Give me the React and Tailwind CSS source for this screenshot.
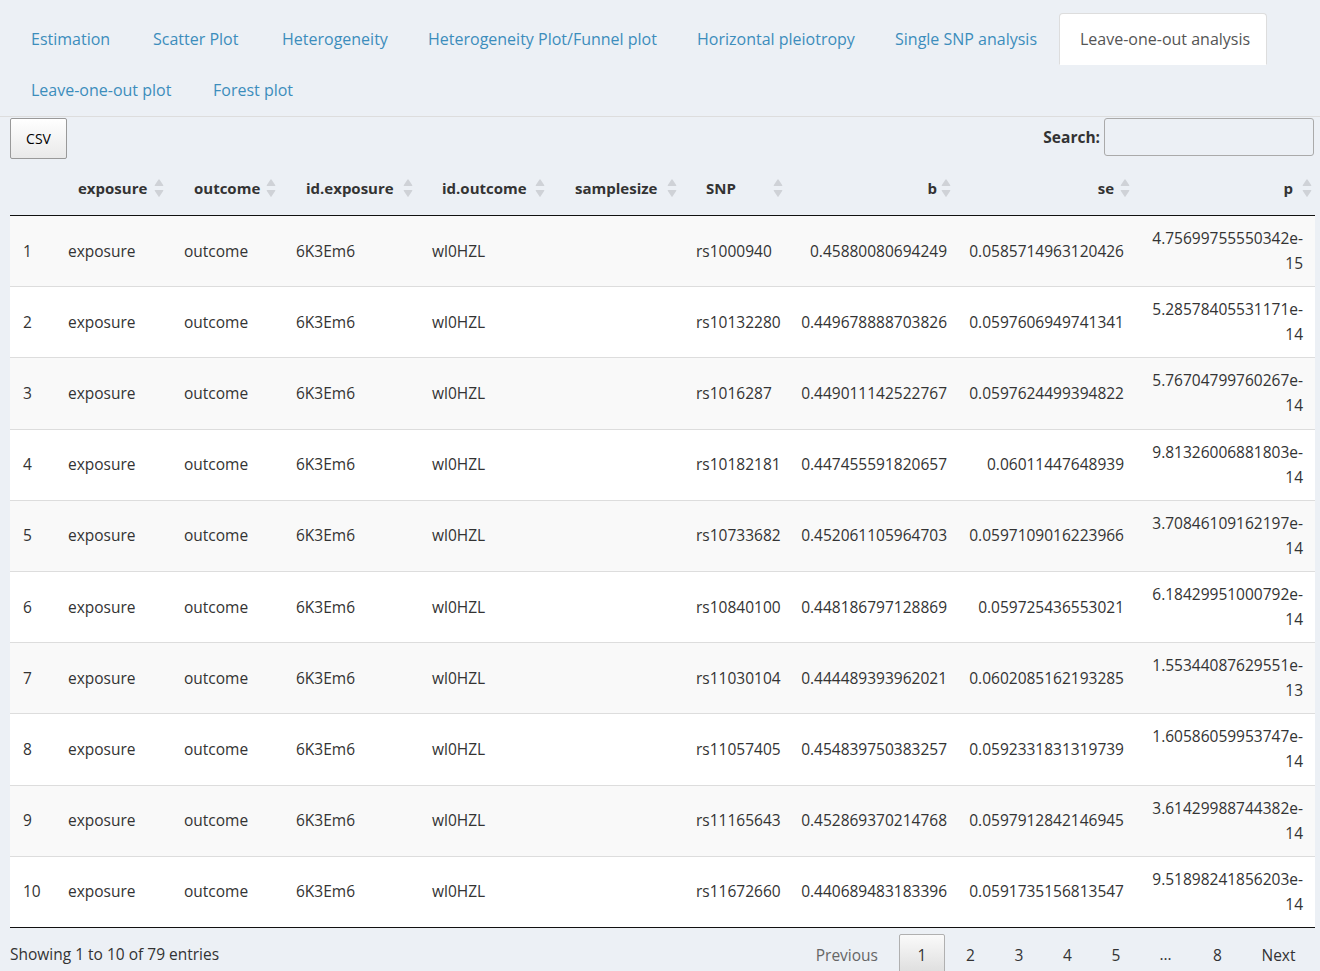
import React from "react";

const FONT = { fontFamily: '"Open Sans", "Liberation Sans", Arial, sans-serif' };

const tabsRow = [
  { label: "Estimation", cls: "w-[120px]" },
  { label: "Scatter Plot", cls: "w-[127px]" },
  { label: "Heterogeneity", cls: "w-[144px]" },
  { label: "Heterogeneity Plot/Funnel plot", cls: "w-[267px]" },
  { label: "Horizontal pleiotropy", cls: "w-[196px]" },
  { label: "Single SNP analysis", cls: "w-[183px]" },
  { label: "Leave-one-out analysis", cls: "w-[208px]", active: true },
  { label: "Leave-one-out plot", cls: "w-[180px]" },
  { label: "Forest plot", cls: "w-[118px]" },
];

const rows = [
  ["1", "rs1000940", "0.45880080694249", "0.0585714963120426", "4.75699755550342e", "15"],
  ["2", "rs10132280", "0.449678888703826", "0.0597606949741341", "5.28578405531171e", "14"],
  ["3", "rs1016287", "0.449011142522767", "0.0597624499394822", "5.76704799760267e", "14"],
  ["4", "rs10182181", "0.447455591820657", "0.06011447648939", "9.81326006881803e", "14"],
  ["5", "rs10733682", "0.452061105964703", "0.0597109016223966", "3.70846109162197e", "14"],
  ["6", "rs10840100", "0.448186797128869", "0.059725436553021", "6.18429951000792e", "14"],
  ["7", "rs11030104", "0.444489393962021", "0.0602085162193285", "1.55344087629551e", "13"],
  ["8", "rs11057405", "0.454839750383257", "0.0592331831319739", "1.60586059953747e", "14"],
  ["9", "rs11165643", "0.452869370214768", "0.0597912842146945", "3.61429988744382e", "14"],
  ["10", "rs11672660", "0.440689483183396", "0.0591735156813547", "9.51898241856203e", "14"],
];

function SortIcon({ cls }) {
  return (
    <svg
      width="10"
      height="20"
      viewBox="0 0 10 20"
      className={"absolute top-1/2 -translate-y-1/2 " + cls}
    >
      <path d="M5 1.2 Q5.4 1.2 5.7 1.7 L9.3 7.3 Q9.6 8 8.9 8 L1.1 8 Q0.4 8 0.7 7.3 L4.3 1.7 Q4.6 1.2 5 1.2 Z" fill="#000" fillOpacity="0.12" />
      <path d="M1.1 12 L8.9 12 Q9.6 12 9.3 12.7 L5.7 18.3 Q5.4 18.8 5 18.8 Q4.6 18.8 4.3 18.3 L0.7 12.7 Q0.4 12 1.1 12 Z" fill="#000" fillOpacity="0.12" />
    </svg>
  );
}

function Th({ children, align = "left", pad, arrow }) {
  return (
    <th
      className={
        "relative pt-[15px] pb-[14px] leading-[25px] text-[15px] font-bold text-[#333] border-b border-b-[#111] whitespace-nowrap " +
        (align === "left" ? "text-left " : "text-right ") +
        pad
      }
    >
      {children}
      {arrow && <SortIcon cls={arrow} />}
    </th>
  );
}

export default function App() {
  return (
    <div className="min-h-screen w-full bg-[#ecf0f5] text-[#333]" style={FONT}>
      {/* Tabs */}
      <ul className="flex flex-wrap pt-[13px] pb-[1px] pl-[10px] border-b border-[#ddd]">
        {tabsRow.map((t) => (
          <li key={t.label} className={"mr-[2px] mb-[-1px] h-[52px] " + t.cls}>
            <a
              className={
                "flex h-full items-center px-[20px] text-[16px] leading-[25px] whitespace-nowrap rounded-t-[4px] border " +
                (t.active
                  ? "bg-white border-[#ddd] border-b-transparent text-[#555]"
                  : "border-transparent text-[#3c8dbc]")
              }
            >
              {t.label}
            </a>
          </li>
        ))}
      </ul>

      <div className="pl-[10px] pr-[5px]">
        {/* Controls */}
        <div className="flex justify-between items-start pt-[1px] h-[44px]">
          <button className="w-[57px] h-[41px] flex items-center justify-center rounded-[2px] border border-[#999] bg-gradient-to-b from-white to-[#e9e9e9] text-[14px] text-black">
            CSV
          </button>
          <label className="flex items-center mr-[1px] h-[38px]">
            <span className="font-bold text-[15.5px] text-[#333] pt-[1px]">Search:</span>
            <input className="ml-[4px] w-[210px] h-[38px] rounded-[3px] border border-[#aaa] bg-transparent px-[5px] outline-none" />
          </label>
        </div>

        {/* Table */}
        <table className="table-fixed w-[1305px]">
          <colgroup>
            <col className="w-[48px]" />
            <col className="w-[116px]" />
            <col className="w-[112px]" />
            <col className="w-[136px]" />
            <col className="w-[133px]" />
            <col className="w-[131px]" />
            <col className="w-[107px]" />
            <col className="w-[164px]" />
            <col className="w-[177px]" />
            <col className="w-[181px]" />
          </colgroup>
          <thead>
            <tr>
              <Th pad="pl-[13px]"></Th>
              <Th pad="pl-[20px]" arrow="right-[10px]">exposure</Th>
              <Th pad="pl-[20px]" arrow="right-[10px]">outcome</Th>
              <Th pad="pl-[20px]" arrow="right-[9px]">id.exposure</Th>
              <Th pad="pl-[20px]" arrow="right-[10px]">id.outcome</Th>
              <Th pad="pl-[20px]" arrow="right-[9px]">samplesize</Th>
              <Th pad="pl-[20px]" arrow="right-[10px]">SNP</Th>
              <Th align="right" pad="pr-[20px]" arrow="right-[6px]">b</Th>
              <Th align="right" pad="pr-[20px]" arrow="right-[4px]">se</Th>
              <Th align="right" pad="pr-[22px]" arrow="right-[3px]">p</Th>
            </tr>
          </thead>
          <tbody>
            {rows.map((r, i) => {
              const bg = i % 2 === 0 ? "bg-[#f9f9f9]" : "bg-white";
              const bt = i === 0 ? "" : "border-t border-t-[#ddd] ";
              const bb = i === rows.length - 1 ? "border-b border-b-[#111] " : "";
              const td =
                "py-[10.1px] leading-[25px] text-[15.5px] text-[#333] align-middle whitespace-nowrap " +
                bt +
                bb;
              return (
                <tr key={r[0]} className={bg}>
                  <td className={td + "pl-[13px]"}>{r[0]}</td>
                  <td className={td + "pl-[10px]"}>exposure</td>
                  <td className={td + "pl-[10px]"}>outcome</td>
                  <td className={td + "pl-[10px]"}>6K3Em6</td>
                  <td className={td + "pl-[10px]"}>wl0HZL</td>
                  <td className={td + "pl-[10px]"}></td>
                  <td className={td + "pl-[10px]"}>{r[1]}</td>
                  <td className={td + "text-right pr-[10px]"}>{r[2]}</td>
                  <td className={td + "text-right pr-[10px]"}>{r[3]}</td>
                  <td className={td + "text-right pr-[12px]"}>
                    {r[4]}-
                    <br />
                    {r[5]}
                  </td>
                </tr>
              );
            })}
          </tbody>
        </table>

        {/* Footer */}
        <div className="flex justify-between items-start">
          <div className="pt-[14px] leading-[25px] text-[15.5px] text-[#333]">
            Showing 1 to 10 of 79 entries
          </div>
          <div className="flex pt-[6px] mr-[1px] text-[15.5px] leading-[25px]">
            <span className="px-[17.5px] py-[8px] border border-transparent text-[#666]">Previous</span>
            <span className="ml-[2.5px] w-[46px] text-center py-[8px] border border-[#b0b0b0] rounded-[2px] bg-gradient-to-b from-[#fafafa] to-[#dcdcdc] text-[#333]">
              1
            </span>
            {["2", "3", "4", "5"].map((n) => (
              <span key={n} className="ml-[2.5px] w-[46px] text-center py-[8px] border border-transparent text-[#333]">
                {n}
              </span>
            ))}
            <span className="w-[53px] text-center py-[8px] text-[#333]">…</span>
            <span className="ml-[2.5px] w-[46px] text-center py-[8px] border border-transparent text-[#333]">8</span>
            <span className="ml-[2.5px] px-[17.5px] py-[8px] border border-transparent text-[#333]">Next</span>
          </div>
        </div>
      </div>
    </div>
  );
}
